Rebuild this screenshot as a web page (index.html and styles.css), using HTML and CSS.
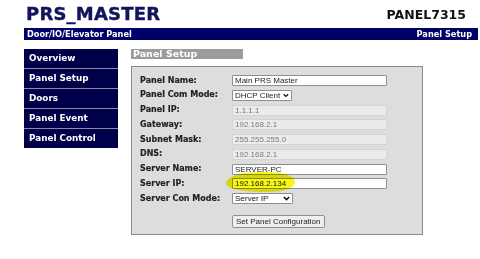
FILE: index.html
```html
<!DOCTYPE html>
<html lang="en">
<head>
    <meta charset="UTF-8">
    <title>PRS_MASTER - Panel Setup</title>
    <link rel="stylesheet" href="styles.css">
</head>
<body>
    <div class="page">
        <div class="top">
            <h1 class="title">PRS_MASTER</h1>
            <div class="panel-id">PANEL7315</div>
        </div>
        <div class="bar">
            <span>Door/IO/Elevator Panel</span>
            <span>Panel Setup</span>
        </div>
        <div class="content">
            <ul class="nav">
                <li>Overview</li>
                <li>Panel Setup</li>
                <li>Doors</li>
                <li>Panel Event</li>
                <li>Panel Control</li>
            </ul>
            <div class="main">
                <div class="section-title">Panel Setup</div>
                <div class="setup-box">
                    <div class="form">
                        <label>Panel Name:</label>
                        <div class="field"><span class="input">Main PRS Master</span></div>

                        <label>Panel Com Mode:</label>
                        <div class="field"><span class="select short">DHCP Client <svg width="7" height="5" viewBox="0 0 7 5"><path d="M0.8 1 L3.5 3.6 L6.2 1" fill="none" stroke="#111" stroke-width="1.5"/></svg></span></div>

                        <label>Panel IP:</label>
                        <div class="field"><span class="input disabled">1.1.1.1</span></div>

                        <label>Gateway:</label>
                        <div class="field"><span class="input disabled">192.168.2.1</span></div>

                        <label>Subnet Mask:</label>
                        <div class="field"><span class="input disabled">255.255.255.0</span></div>

                        <label>DNS:</label>
                        <div class="field"><span class="input disabled">192.168.2.1</span></div>

                        <label>Server Name:</label>
                        <div class="field"><span class="input">SERVER-PC</span></div>

                        <label>Server IP:</label>
                        <div class="field">
                            <span class="input">192.168.2.134</span>
                            <span class="highlight"></span>
                        </div>

                        <label>Server Con Mode:</label>
                        <div class="field"><span class="select wide">Server IP <svg width="7" height="5" viewBox="0 0 7 5"><path d="M0.8 1 L3.5 3.6 L6.2 1" fill="none" stroke="#111" stroke-width="1.5"/></svg></span></div>
                    </div>
                    <div class="actions">
                        <button type="button" class="set-btn">Set Panel Configuration</button>
                    </div>
                </div>
            </div>
        </div>
    </div>
</body>
</html>
```

FILE: styles.css
```css
body {
    margin: 0;
    background: #fff;
    font-family: "DejaVu Sans", Verdana, sans-serif;
}
.page {
    width: 454px;
    padding-left: 24px;
}
.top {
    height: 28px;
    display: flex;
    justify-content: space-between;
    align-items: flex-start;
}
.title {
    margin: 3px 0 0 2px;
    font-size: 18px;
    font-weight: bold;
    color: #14145e;
    letter-spacing: 0.2px;
    -webkit-text-stroke: 0.4px #14145e;
}
.panel-id {
    margin: 7px 12px 0 0;
    font-size: 12.5px;
    font-weight: bold;
    color: #111;
}
.bar {
    height: 12px;
    background: #000066;
    color: #fff;
    font-size: 8.2px;
    font-weight: bold;
    display: flex;
    justify-content: space-between;
    align-items: center;
    padding: 0 6px 0 3px;
}
.content {
    display: flex;
    gap: 13px;
}
.nav {
    list-style: none;
    margin: 9px 0 0 0;
    padding: 0;
    width: 94px;
}
.nav li {
    height: 19px;
    line-height: 19px;
    background: #00004a;
    color: #fff;
    font-size: 8.8px;
    font-weight: bold;
    padding-left: 5px;
    border-bottom: 1px solid #8a8aa8;
}
.nav li:last-child {
    border-bottom: none;
}
.main {
    margin-top: 9px;
}
.section-title {
    width: 110px;
    height: 10px;
    line-height: 10px;
    background: #9c9c9c;
    color: #fff;
    font-size: 9.5px;
    font-weight: bold;
    padding-left: 2px;
}
.setup-box {
    margin-top: 7px;
    width: 290px;
    height: 160px;
    background: #dddddd;
    border: 1px solid #8a8a8a;
    padding-top: 7px;
}
.form {
    display: grid;
    grid-template-columns: 92px 1fr;
    grid-auto-rows: 14.75px;
    padding-left: 8px;
}
.form label {
    font-size: 8px;
    font-weight: bold;
    color: #222;
    display: flex;
    align-items: center;
    height: 12px;
    -webkit-text-stroke: 0.15px #222;
}
.field {
    position: relative;
}
.input, .select {
    display: flex;
    align-items: center;
    box-sizing: border-box;
    height: 11px;
    font-family: "Liberation Sans", Arial, sans-serif;
    font-size: 8px;
    color: #222;
    white-space: nowrap;
    background: #fff;
    border: 1px solid #8f8f8f;
    border-radius: 1px;
    padding-left: 2px;
    margin-top: 1px;
}
.input {
    width: 155px;
}
.input.disabled {
    background: #ebebeb;
    border-color: #d4d4d4;
    color: #7a7a7a;
}
.select {
    justify-content: space-between;
    padding-right: 2px;
    gap: 3px;
}
.select.short {
    width: 60px;
}
.select.wide {
    width: 61px;
}
.highlight {
    position: absolute;
    left: -6px;
    top: -5px;
    width: 69px;
    height: 20px;
    background: #f5f500;
    border-radius: 50% 40% 40% 55% / 60% 50% 50% 45%;
    mix-blend-mode: multiply;
    filter: blur(0.6px);
    opacity: 0.9;
}
.actions {
    display: flex;
    padding-left: 100px;
    margin-top: 8px;
}
.set-btn {
    height: 13px;
    padding: 0 3px;
    font-family: "Liberation Sans", Arial, sans-serif;
    font-size: 8px;
    color: #222;
    background: #efefef;
    border: 1px solid #8f8f8f;
    border-radius: 2px;
    line-height: 11px;
}
```
